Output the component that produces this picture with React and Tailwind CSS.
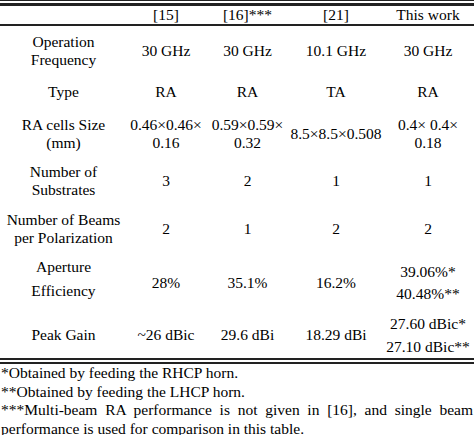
const COLS = 'grid grid-cols-[127px_78px_85px_92px_1fr]';

const rows = [
  {
    h: 'h-[49px]',
    label: ['Operation', 'Frequency'],
    lead: 'leading-[18px]',
    cells: [['30 GHz'], ['30 GHz'], ['10.1 GHz'], ['30 GHz']],
  },
  {
    h: 'h-[34px]',
    label: ['Type'],
    lead: 'leading-[18px]',
    cells: [['RA'], ['RA'], ['TA'], ['RA']],
  },
  {
    h: 'h-[50px]',
    label: ['RA cells Size', '(mm)'],
    lead: 'leading-[18px]',
    cells: [
      ['0.46×0.46×', '0.16'],
      ['0.59×0.59×', '0.32'],
      ['8.5×8.5×0.508'],
      ['0.4× 0.4×', '0.18'],
    ],
  },
  {
    h: 'h-[44px]',
    label: ['Number of', 'Substrates'],
    lead: 'leading-[18px]',
    cells: [['3'], ['2'], ['1'], ['1']],
  },
  {
    h: 'h-[52px]',
    label: ['Number of Beams', 'per Polarization'],
    lead: 'leading-[18px]',
    cells: [['2'], ['1'], ['2'], ['2']],
  },
  {
    h: 'h-[52px]',
    label: ['Aperture', 'Efficiency'],
    labelClass: 'leading-[24px] pb-[8px]',
    lead: 'leading-[22px]',
    cells: [['28%'], ['35.1%'], ['16.2%'], ['39.06%*', '40.48%**']],
  },
  {
    h: 'h-[51px] pt-[5px]',
    label: ['Peak Gain'],
    lead: 'leading-[23px]',
    cells: [['~26 dBic'], ['29.6 dBi'], ['18.29 dBi'], ['27.60 dBic*', '27.10 dBic**']],
  },
];

function Cell({ lines, lead }) {
  return (
    <div className={`flex flex-col items-center justify-center text-center whitespace-nowrap ${lead}`}>
      {lines.map((l, i) => (
        <span key={i}>{l}</span>
      ))}
    </div>
  );
}

export default function App() {
  return (
    <div
      className="w-[474px] h-[435px] overflow-hidden bg-white text-black text-[15.5px]"
      style={{ fontFamily: '"Liberation Serif", "Times New Roman", serif' }}
    >
      {/* top double rule */}
      <div className="h-px bg-[#222]" />
      <div className="h-[2px]" />
      <div className="h-[3px] bg-[#222]" />

      {/* header */}
      <div className={`${COLS} h-[18px] leading-[18px] border-b-2 border-[#222] box-content`}>
        <div />
        <div className="text-center">[15]</div>
        <div className="text-center">[16]***</div>
        <div className="text-center">[21]</div>
        <div className="text-center">This work</div>
      </div>

      {rows.map((r, i) => (
        <div key={i} className={`${COLS} ${r.h}`}>
          <Cell lines={r.label} lead={r.labelClass || 'leading-[18px]'} />
          {r.cells.map((c, j) => (
            <Cell key={j} lines={c} lead={c.length > 1 ? r.lead : 'leading-[18px]'} />
          ))}
        </div>
      ))}

      {/* bottom double rule */}
      <div className="h-[2px] bg-[#222]" />
      <div className="h-[2px]" />
      <div className="h-[2px] bg-[#222]" />

      {/* footnotes */}
      <div className="px-[1px] leading-[18.5px]">
        <p>*Obtained by feeding the RHCP horn.</p>
        <p>**Obtained by feeding the LHCP horn.</p>
        <p className="text-justify">
          ***Multi-beam RA performance is not given in [16], and single beam performance is used for
          comparison in this table.
        </p>
      </div>
    </div>
  );
}
